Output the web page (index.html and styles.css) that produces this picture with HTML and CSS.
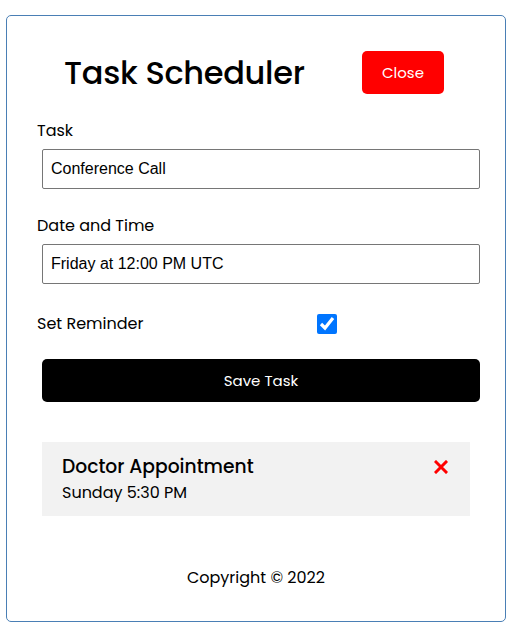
FILE: index.html
```html
<!DOCTYPE html>
<html>
<head>
<meta charset="utf-8">
<link rel="stylesheet" href="styles.css">
</head>
<body>
<div class="container">
  <header class="header">
    <h1 class="title">Task Scheduler</h1>
    <button class="btn-close">Close</button>
  </header>
  <form class="form">
    <div class="field">
      <label class="label">Task</label>
      <input class="input" type="text" value="Conference Call">
    </div>
    <div class="field">
      <label class="label">Date and Time</label>
      <input class="input" type="text" value="Friday at 12:00 PM UTC">
    </div>
    <div class="reminder">
      <label class="label">Set Reminder</label>
      <input class="check" type="checkbox" checked>
    </div>
    <button class="btn-save" type="button">Save Task</button>
  </form>
  <div class="tasks">
    <div class="task">
      <div class="task-info">
        <h3 class="task-title">Doctor Appointment</h3>
        <p class="task-time">Sunday 5:30 PM</p>
      </div>
      <svg class="del" width="14" height="14" viewBox="0 0 14 14"><path d="M2 2 L12 12 M12 2 L2 12" stroke="#ff0000" stroke-width="3" stroke-linecap="square"/></svg>
    </div>
  </div>
  <footer class="footer">Copyright &copy; 2022</footer>
</div>
</body>
</html>
```
FILE: styles.css
```css
* { box-sizing: border-box; }
html, body { margin: 0; padding: 0; background: #fff; }
body { padding: 15px 8px 0 6px; font-family: "Poppins", "Open Sans", sans-serif; color: #000; }
.container {
  width: 500px;
  height: 607px;
  border: 1px solid #4a7fb5;
  border-radius: 5px;
  padding: 35px 0 0 30px;
  display: flex;
  flex-direction: column;
}
.header { display: flex; align-items: center; height: 43px; padding-left: 27px; }
.title { margin: 0; font-size: 32px; font-weight: 500; line-height: 43px; width: 298px; letter-spacing: -0.3px; }
.btn-close {
  width: 82px; height: 43px; background: #ff0000; color: #fff; border: none; border-radius: 5px;
  font-family: inherit; font-size: 15px;
}
.form { display: flex; flex-direction: column; margin-top: 25px; }
.field { display: flex; flex-direction: column; }
.field + .field { margin-top: 25px; }
.label { font-size: 16px; line-height: 24px; }
.input {
  margin: 6px 0 0 5px; width: 438px; height: 40px; border: 1px solid #767676; border-radius: 2px;
  padding: 0 8px; font-family: "Liberation Sans", Arial, sans-serif; font-size: 16px; color: #000;
}
.reminder { display: flex; align-items: center; height: 24px; margin-top: 28px; }
.reminder .label { width: 280px; }
.check { width: 20px; height: 20px; margin: 0; accent-color: #0075ff; }
.btn-save {
  margin: 23px 0 0 5px; width: 438px; height: 43px; background: #000; color: #fff; border: none;
  border-radius: 5px; font-family: inherit; font-size: 15px;
}
.tasks { margin: 40px 0 0 5px; }
.task {
  width: 428px; height: 74px; background: #f2f2f2; display: flex; justify-content: space-between;
  align-items: flex-start; padding: 11px 22px 0 20px;
}
.task-title { margin: 0; font-size: 18.7px; font-weight: 500; line-height: 27px; }
.task-time { margin: 2px 0 0; font-size: 16px; line-height: 22px; }
.del { margin-top: 7px; }
.footer { margin-top: 50px; margin-left: -30px; text-align: center; font-size: 16px; line-height: 24px; }
```
